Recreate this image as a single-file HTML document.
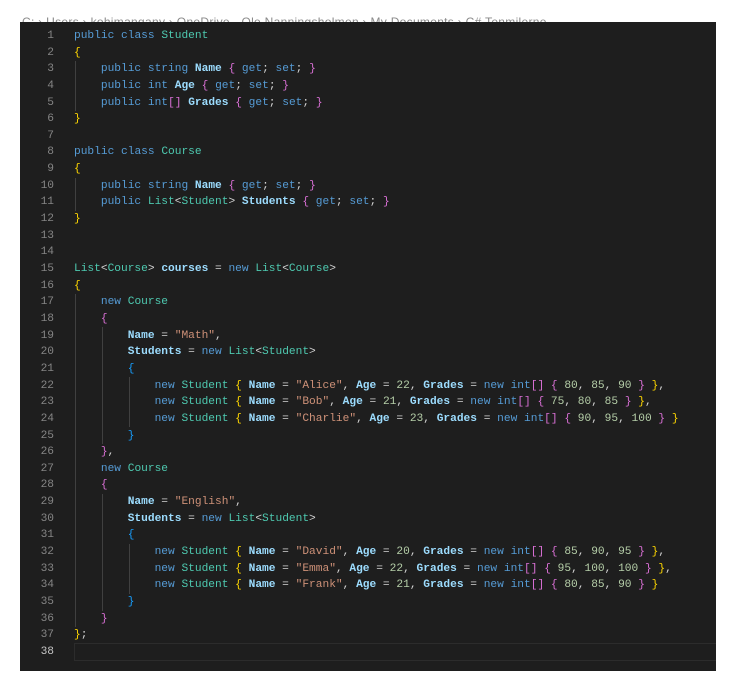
<!DOCTYPE html>
<html><head><meta charset="utf-8"><style>
html,body{margin:0;padding:0;background:#fff;width:737px;height:680px;overflow:hidden}
#ed{position:absolute;left:20px;top:22px;width:696px;height:649px;background:#1e1e1e;overflow:hidden}
#crumb{position:absolute;left:22px;top:15px;font:12px "Liberation Sans",sans-serif;color:#888;white-space:nowrap;letter-spacing:.3px}
.ln{position:absolute;left:0;width:34px;text-align:right;color:#858585;font:11.2px "Liberation Mono",monospace;height:16.65px;line-height:16.65px}
.c{position:absolute;left:54px;white-space:pre;font:11.2px "Liberation Mono",monospace;color:#d4d4d4;height:16.65px;line-height:16.65px}
.k{color:#569cd6}.t{color:#4ec9b0}.p{color:#9cdcfe;font-weight:bold}.s{color:#ce9178}.n{color:#b5cea8}
.y{color:#ffd700}.m{color:#da70d6}.b{color:#179fff}
.g{position:absolute;width:1px;background:#404040}
</style></head><body>
<div id="crumb">C: › Users › kohimangany › OneDrive - Ole Nanningsholmen › My Documents › C# Tenmilerne</div>
<div id="ed">
<div class="g" style="left:55px;top:39px;height:50px"></div>
<div class="g" style="left:55px;top:156px;height:33px"></div>
<div class="g" style="left:55px;top:272px;height:333px"></div>
<div class="g" style="left:82px;top:305px;height:117px"></div>
<div class="g" style="left:82px;top:472px;height:117px"></div>
<div class="g" style="left:109px;top:355px;height:50px"></div>
<div class="g" style="left:109px;top:522px;height:50px"></div>
<div style="position:absolute;left:54px;top:621px;width:642px;height:16px;border:1px solid #2c2c2c"></div>
<div id="L"></div>
</div>
<script>
var lines=[
'<span class="k">public</span> <span class="k">class</span> <span class="t">Student</span>',
'<span class="y">{</span>',
'    <span class="k">public</span> <span class="k">string</span> <span class="p">Name</span> <span class="m">{</span> <span class="k">get</span>; <span class="k">set</span>; <span class="m">}</span>',
'    <span class="k">public</span> <span class="k">int</span> <span class="p">Age</span> <span class="m">{</span> <span class="k">get</span>; <span class="k">set</span>; <span class="m">}</span>',
'    <span class="k">public</span> <span class="k">int</span><span class="m">[]</span> <span class="p">Grades</span> <span class="m">{</span> <span class="k">get</span>; <span class="k">set</span>; <span class="m">}</span>',
'<span class="y">}</span>',
'',
'<span class="k">public</span> <span class="k">class</span> <span class="t">Course</span>',
'<span class="y">{</span>',
'    <span class="k">public</span> <span class="k">string</span> <span class="p">Name</span> <span class="m">{</span> <span class="k">get</span>; <span class="k">set</span>; <span class="m">}</span>',
'    <span class="k">public</span> <span class="t">List</span>&lt;<span class="t">Student</span>&gt; <span class="p">Students</span> <span class="m">{</span> <span class="k">get</span>; <span class="k">set</span>; <span class="m">}</span>',
'<span class="y">}</span>',
'',
'',
'<span class="t">List</span>&lt;<span class="t">Course</span>&gt; <span class="p">courses</span> = <span class="k">new</span> <span class="t">List</span>&lt;<span class="t">Course</span>&gt;',
'<span class="y">{</span>',
'    <span class="k">new</span> <span class="t">Course</span>',
'    <span class="m">{</span>',
'        <span class="p">Name</span> = <span class="s">"Math"</span>,',
'        <span class="p">Students</span> = <span class="k">new</span> <span class="t">List</span>&lt;<span class="t">Student</span>&gt;',
'        <span class="b">{</span>',
'            <span class="k">new</span> <span class="t">Student</span> <span class="y">{</span> <span class="p">Name</span> = <span class="s">"Alice"</span>, <span class="p">Age</span> = <span class="n">22</span>, <span class="p">Grades</span> = <span class="k">new</span> <span class="k">int</span><span class="m">[]</span> <span class="m">{</span> <span class="n">80</span>, <span class="n">85</span>, <span class="n">90</span> <span class="m">}</span> <span class="y">}</span>,',
'            <span class="k">new</span> <span class="t">Student</span> <span class="y">{</span> <span class="p">Name</span> = <span class="s">"Bob"</span>, <span class="p">Age</span> = <span class="n">21</span>, <span class="p">Grades</span> = <span class="k">new</span> <span class="k">int</span><span class="m">[]</span> <span class="m">{</span> <span class="n">75</span>, <span class="n">80</span>, <span class="n">85</span> <span class="m">}</span> <span class="y">}</span>,',
'            <span class="k">new</span> <span class="t">Student</span> <span class="y">{</span> <span class="p">Name</span> = <span class="s">"Charlie"</span>, <span class="p">Age</span> = <span class="n">23</span>, <span class="p">Grades</span> = <span class="k">new</span> <span class="k">int</span><span class="m">[]</span> <span class="m">{</span> <span class="n">90</span>, <span class="n">95</span>, <span class="n">100</span> <span class="m">}</span> <span class="y">}</span>',
'        <span class="b">}</span>',
'    <span class="m">}</span>,',
'    <span class="k">new</span> <span class="t">Course</span>',
'    <span class="m">{</span>',
'        <span class="p">Name</span> = <span class="s">"English"</span>,',
'        <span class="p">Students</span> = <span class="k">new</span> <span class="t">List</span>&lt;<span class="t">Student</span>&gt;',
'        <span class="b">{</span>',
'            <span class="k">new</span> <span class="t">Student</span> <span class="y">{</span> <span class="p">Name</span> = <span class="s">"David"</span>, <span class="p">Age</span> = <span class="n">20</span>, <span class="p">Grades</span> = <span class="k">new</span> <span class="k">int</span><span class="m">[]</span> <span class="m">{</span> <span class="n">85</span>, <span class="n">90</span>, <span class="n">95</span> <span class="m">}</span> <span class="y">}</span>,',
'            <span class="k">new</span> <span class="t">Student</span> <span class="y">{</span> <span class="p">Name</span> = <span class="s">"Emma"</span>, <span class="p">Age</span> = <span class="n">22</span>, <span class="p">Grades</span> = <span class="k">new</span> <span class="k">int</span><span class="m">[]</span> <span class="m">{</span> <span class="n">95</span>, <span class="n">100</span>, <span class="n">100</span> <span class="m">}</span> <span class="y">}</span>,',
'            <span class="k">new</span> <span class="t">Student</span> <span class="y">{</span> <span class="p">Name</span> = <span class="s">"Frank"</span>, <span class="p">Age</span> = <span class="n">21</span>, <span class="p">Grades</span> = <span class="k">new</span> <span class="k">int</span><span class="m">[]</span> <span class="m">{</span> <span class="n">80</span>, <span class="n">85</span>, <span class="n">90</span> <span class="m">}</span> <span class="y">}</span>',
'        <span class="b">}</span>',
'    <span class="m">}</span>',
'<span class="y">}</span>;',
''];
var h='';
for(var i=0;i<lines.length;i++){var yy=(5.9+i*16.65).toFixed(2);
h+='<div class="ln" style="top:'+yy+'px'+(i==37?';color:#c6c6c6':'')+'">'+(i+1)+'</div><div class="c" style="top:'+yy+'px">'+lines[i]+'</div>';}
document.getElementById('L').innerHTML=h;
</script>
</body></html>
